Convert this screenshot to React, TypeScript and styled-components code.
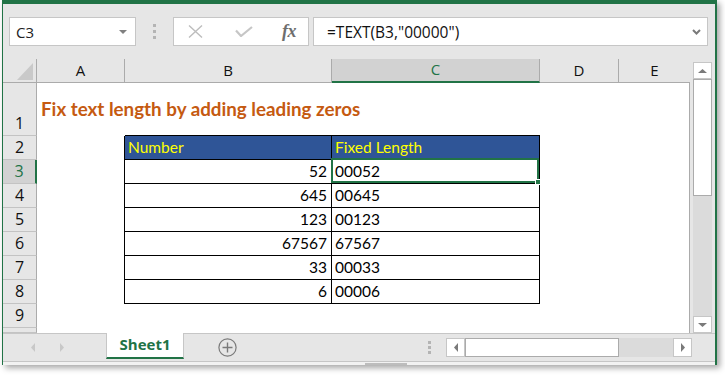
import React from 'react';
import styled, { createGlobalStyle } from 'styled-components';

const GREEN = '#217346';
const UI_FONT = '"Open Sans", "Noto Sans", sans-serif';
const CELL_FONT = 'Lato, "Liberation Sans", sans-serif';

const Global = createGlobalStyle`
  html, body { margin: 0; padding: 0; background: #fff; overflow: hidden; }
  body { width: 725px; height: 375px; }
  * { box-sizing: border-box; }
`;

const Window = styled.div`
  margin-left: 2px;
  width: 715px;
  height: 365px;
  border-top: 4px solid ${GREEN};
  border-left: 1px solid ${GREEN};
  border-right: 2px solid ${GREEN};
  background: #e6e6e6;
  box-shadow: 3px 3px 6px rgba(0, 0, 0, 0.35);
  display: flex;
  flex-direction: column;
`;

/* ---------- formula bar ---------- */
const FormulaBar = styled.div`
  height: 55px;
  flex: none;
  display: flex;
  align-items: flex-start;
  padding: 13px 7px 0 6px;
`;

const NameBox = styled.div`
  width: 127px;
  height: 29px;
  border: 1px solid #c6c6c6;
  background: #fff;
  display: flex;
  align-items: center;
  justify-content: space-between;
  padding: 0 8px 0 6px;
  font: 15px ${UI_FONT};
  color: #222;
`;

const Grip = styled.div`
  width: 37px;
  height: 29px;
  display: flex;
  align-items: center;
  justify-content: center;
`;

const DotStack = styled.div<{ $gap: number }>`
  display: flex;
  flex-direction: column;
  gap: ${p => p.$gap}px;
  & > span {
    display: block;
    width: 3px;
    height: 3px;
    background: #b4b4b4;
  }
`;

const FxBox = styled.div`
  width: 136px;
  height: 29px;
  border: 1px solid #c6c6c6;
  background: #fff;
  display: flex;
  align-items: center;
  padding-left: 14px;
`;

const FxLabel = styled.span`
  font-family: "Liberation Serif", "DejaVu Serif", serif;
  font-style: italic;
  font-weight: bold;
  font-size: 18px;
  color: #6e6e6e;
  margin-left: 29px;
  letter-spacing: -0.5px;
`;

const FormulaInput = styled.div`
  flex: 1;
  margin-left: 4px;
  height: 29px;
  border: 1px solid #c6c6c6;
  background: #fff;
  display: flex;
  align-items: center;
  justify-content: space-between;
  padding: 0 6px 0 13px;
  font: 15.5px ${UI_FONT};
  color: #111;
`;

/* ---------- sheet ---------- */
const Main = styled.div`
  height: 274px;
  flex: none;
  display: flex;
`;

const Sheet = styled.div`
  width: 687px;
  display: grid;
  grid-template-columns: 34px 88px 207px 208px 79px 71px;
  grid-template-rows: 24px 53px repeat(8, 24px) 5px;
  background: #fff;
  overflow: hidden;
`;

const Corner = styled.div`
  background: #e6e6e6;
  border-right: 1px solid #ababab;
  border-bottom: 1px solid #ababab;
  display: flex;
  align-items: flex-end;
  justify-content: flex-end;
  padding: 0 3px 2px 0;
`;

const ColHead = styled.div<{ $active?: boolean; $last?: boolean }>`
  display: flex;
  justify-content: center;
  align-items: flex-end;
  font: 15px/23px ${UI_FONT};
  color: ${p => (p.$active ? GREEN : '#111')};
  background: ${p => (p.$active ? '#d2d2d2' : '#e6e6e6')};
  border-right: ${p => (p.$last ? 'none' : '1px solid #ababab')};
  border-bottom: ${p => (p.$active ? `2px solid ${GREEN}` : '1px solid #ababab')};
`;

const RowHead = styled.div<{ $active?: boolean }>`
  display: flex;
  justify-content: center;
  align-items: flex-end;
  overflow: hidden;
  font: 16px/23px ${UI_FONT};
  color: ${p => (p.$active ? GREEN : '#111')};
  background: ${p => (p.$active ? '#d2d2d2' : '#e6e6e6')};
  border-right: ${p => (p.$active ? `2px solid ${GREEN}` : '1px solid #ababab')};
  border-bottom: 1px solid #c3c3c3;
`;

const Cell = styled.div<{
  $align?: 'left' | 'right';
  $fill?: string;
  $color?: string;
  $bb?: boolean;
  $br?: boolean;
  $edge?: boolean;
}>`
  position: relative;
  min-width: 0;
  display: flex;
  align-items: flex-end;
  justify-content: ${p => (p.$align === 'right' ? 'flex-end' : 'flex-start')};
  padding: 0 4px 0 3px;
  font: 15.5px/23px ${CELL_FONT};
  color: ${p => p.$color ?? '#000'};
  background: ${p => p.$fill ?? 'transparent'};
  border-right: ${p => (p.$br ? '1px solid #000' : p.$edge ? '1px solid #ababab' : 'none')};
  border-bottom: ${p => (p.$bb ? '1px solid #000' : 'none')};
  white-space: nowrap;
`;

const Title = styled.span`
  font: bold 18.8px/22px ${CELL_FONT};
  color: #c55a11;
  padding-bottom: 16px;
  padding-left: 1px;
`;

const Selection = styled.div`
  position: absolute;
  top: -2px;
  left: -1px;
  right: 0;
  bottom: 0;
  border: 2px solid ${GREEN};
  z-index: 2;
  pointer-events: none;
`;

const FillHandle = styled.div`
  position: absolute;
  right: -4px;
  bottom: -4px;
  width: 6px;
  height: 6px;
  background: ${GREEN};
  border: 1px solid #fff;
`;

/* ---------- scroll bars ---------- */
const VScroll = styled.div`
  width: 25px;
  display: flex;
  flex-direction: column;
  padding: 3px 3px 0 3px;
`;

const ScrollBtn = styled.div<{ $w?: number; $h?: number }>`
  flex: none;
  width: ${p => (p.$w ? `${p.$w}px` : 'auto')};
  height: ${p => (p.$h ? `${p.$h}px` : 'auto')};
  background: #fff;
  border: 1px solid #c6c6c6;
  display: flex;
  align-items: center;
  justify-content: center;
`;

const Thumb = styled.div<{ $w?: number; $h?: number }>`
  flex: none;
  width: ${p => (p.$w ? `${p.$w}px` : 'auto')};
  height: ${p => (p.$h ? `${p.$h}px` : 'auto')};
  background: #fff;
  border: 1px solid #ababab;
`;

const Track = styled.div`
  flex: 1;
  background: #dbdbdb;
`;

/* ---------- tabs ---------- */
const TabBar = styled.div`
  height: 29px;
  flex: none;
  display: flex;
  align-items: center;
  border-top: 1px solid #c6c6c6;
  border-bottom: 1px solid #c6c6c6;
`;

const NavArea = styled.div`
  width: 103px;
  align-self: stretch;
  display: flex;
  align-items: center;
  gap: 25px;
  padding-left: 28px;
`;

const Tab = styled.div`
  width: 78px;
  height: 26px;
  align-self: flex-start;
  margin-top: -1px;
  background: #fff;
  border-left: 1px solid #c6c6c6;
  border-right: 1px solid #c6c6c6;
  border-bottom: 2px solid ${GREEN};
  display: flex;
  justify-content: center;
  font: bold 15px/22px ${UI_FONT};
  color: ${GREEN};
`;

const AddSheet = styled.div`
  margin-left: 34px;
  display: flex;
  align-items: center;
`;

const Spacer = styled.div`
  flex: 1;
`;

const HScroll = styled.div`
  width: 246px;
  height: 19px;
  margin: 0 23px 0 15px;
  display: flex;
`;

const BottomStrip = styled.div`
  flex: 1;
  background: #f2f2f2;
  padding-left: 362px;
`;

const ResizeGrip = styled.div`
  width: 42px;
  height: 2px;
  margin-top: 1px;
  background: #bdbdbd;
`;

/* ---------- icons ---------- */
const Tri = ({ dir, color = '#777', w = 8, h = 4 }: { dir: 'up' | 'down' | 'left' | 'right'; color?: string; w?: number; h?: number }) => {
  const pts =
    dir === 'down' ? `0,0 ${w},0 ${w / 2},${h}` :
    dir === 'up' ? `0,${h} ${w},${h} ${w / 2},0` :
    dir === 'left' ? `${w},0 ${w},${h} 0,${h / 2}` :
    `0,0 0,${h} ${w},${h / 2}`;
  return (
    <svg width={w} height={h} viewBox={`0 0 ${w} ${h}`}>
      <polygon points={pts} fill={color} />
    </svg>
  );
};

type Row = { n: number; b?: string; c?: string; head?: boolean; title?: boolean; sel?: boolean; partial?: boolean };

const rows: Row[] = [
  { n: 1, title: true },
  { n: 2, b: 'Number', c: 'Fixed Length', head: true },
  { n: 3, b: '52', c: '00052', sel: true },
  { n: 4, b: '645', c: '00645' },
  { n: 5, b: '123', c: '00123' },
  { n: 6, b: '67567', c: '67567' },
  { n: 7, b: '33', c: '00033' },
  { n: 8, b: '6', c: '00006' },
  { n: 9 },
  { n: 10, partial: true },
];

const cols = ['A', 'B', 'C', 'D', 'E'];

export default function App() {
  return (
    <>
      <Global />
      <Window>
        <FormulaBar>
          <NameBox>
            <span>C3</span>
            <Tri dir="down" w={8} h={4} color="#808080" />
          </NameBox>
          <Grip>
            <DotStack $gap={3}>
              <span />
              <span />
              <span />
            </DotStack>
          </Grip>
          <FxBox>
            <svg width="15" height="13" viewBox="0 0 15 13">
              <path d="M1 0.5 L14 12.5 M14 0.5 L1 12.5" stroke="#bdbdbd" strokeWidth="1.4" fill="none" />
            </svg>
            <svg width="18" height="11" viewBox="0 0 18 11" style={{ marginLeft: 32 }}>
              <path d="M1 4.5 L6 10 L17 1" stroke="#c6c6c6" strokeWidth="2.2" fill="none" />
            </svg>
            <FxLabel>fx</FxLabel>
          </FxBox>
          <FormulaInput>
            <span>=TEXT(B3,"00000")</span>
            <svg width="9" height="6" viewBox="0 0 9 6">
              <path d="M1 1 L4.5 4.5 L8 1" stroke="#7a7a7a" strokeWidth="2" fill="none" />
            </svg>
          </FormulaInput>
        </FormulaBar>

        <Main>
          <Sheet>
            <Corner>
              <svg width="16" height="17" viewBox="0 0 16 17">
                <polygon points="16,0 16,17 0,17" fill="#c9c9c9" />
              </svg>
            </Corner>
            {cols.map((c, i) => (
              <ColHead key={c} $active={c === 'C'} $last={i === cols.length - 1}>
                {c}
              </ColHead>
            ))}
            {rows.map(r => {
              const inTable = !!(r.b || r.c);
              return (
                <React.Fragment key={r.n}>
                  <RowHead $active={r.sel}>{r.partial ? null : r.n}</RowHead>
                  <Cell $br={inTable}>{r.title && <Title>Fix text length by adding leading zeros</Title>}</Cell>
                  <Cell
                    $align={r.head ? 'left' : 'right'}
                    $fill={r.head ? '#2f5597' : undefined}
                    $color={r.head ? '#ffff00' : undefined}
                    $br={inTable}
                    $bb={inTable || r.title}
                  >
                    {r.b}
                  </Cell>
                  <Cell
                    $fill={r.head ? '#2f5597' : undefined}
                    $color={r.head ? '#ffff00' : undefined}
                    $br={inTable}
                    $bb={inTable || r.title}
                  >
                    {r.c}
                    {r.sel && (
                      <Selection>
                        <FillHandle />
                      </Selection>
                    )}
                  </Cell>
                  <Cell />
                  <Cell $edge />
                </React.Fragment>
              );
            })}
          </Sheet>
          <VScroll>
            <ScrollBtn $h={17}>
              <Tri dir="up" w={9} h={4} color="#7a7a7a" />
            </ScrollBtn>
            <Thumb $h={117} />
            <Track />
            <ScrollBtn $h={17}>
              <Tri dir="down" w={9} h={4} color="#7a7a7a" />
            </ScrollBtn>
          </VScroll>
        </Main>

        <TabBar>
          <NavArea>
            <Tri dir="left" w={4} h={9} color="#c8c8c8" />
            <Tri dir="right" w={4} h={9} color="#c8c8c8" />
          </NavArea>
          <Tab>Sheet1</Tab>
          <AddSheet>
            <svg width="19" height="19" viewBox="0 0 19 19">
              <circle cx="9.5" cy="9.5" r="8.6" stroke="#7a7a7a" strokeWidth="1.2" fill="none" />
              <path d="M9.5 4.5 V14.5 M4.5 9.5 H14.5" stroke="#7a7a7a" strokeWidth="1.4" />
            </svg>
          </AddSheet>
          <Spacer />
          <DotStack $gap={2}>
            <span />
            <span />
            <span />
          </DotStack>
          <HScroll>
            <ScrollBtn $w={19}>
              <Tri dir="left" w={4} h={9} color="#7a7a7a" />
            </ScrollBtn>
            <Thumb $w={154} />
            <Track />
            <ScrollBtn $w={19}>
              <Tri dir="right" w={4} h={9} color="#7a7a7a" />
            </ScrollBtn>
          </HScroll>
        </TabBar>
        <BottomStrip>
          <ResizeGrip />
        </BottomStrip>
      </Window>
    </>
  );
}
